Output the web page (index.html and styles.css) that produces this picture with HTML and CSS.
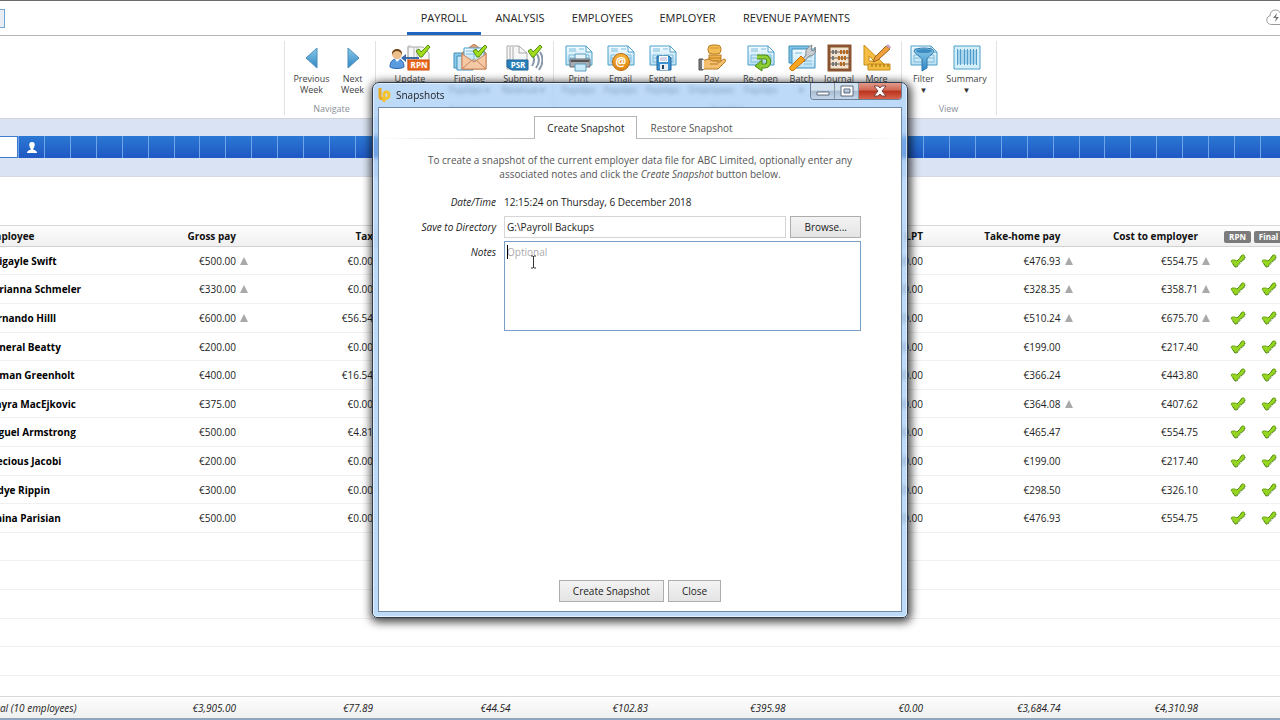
FILE: index.html
```html
<!DOCTYPE html>
<html lang="en">
<head>
    <meta charset="UTF-8">
    <meta name="viewport" content="width=device-width, initial-scale=1.0">
    <title>Payroll - Snapshots</title>
    <link rel="stylesheet" href="styles.css">
</head>
<body>
    <!-- shared icon shapes -->
    <svg class="defs" width="0" height="0" aria-hidden="true">
        <defs>
            <linearGradient id="gBlue" x1="0" y1="0" x2="0" y2="1">
                <stop offset="0" stop-color="#8ccbea"/><stop offset="1" stop-color="#2f86c4"/>
            </linearGradient>
            <linearGradient id="gPage" x1="0" y1="0" x2="0" y2="1">
                <stop offset="0" stop-color="#f4fbff"/><stop offset="1" stop-color="#b9e0f3"/>
            </linearGradient>
            <linearGradient id="gOrange" x1="0" y1="0" x2="0" y2="1">
                <stop offset="0" stop-color="#f9b53c"/><stop offset="1" stop-color="#dd820f"/>
            </linearGradient>
            <symbol id="sheet" viewBox="0 0 28 28">
                <path d="M1 2h20l6 6v13H1z" fill="url(#gPage)" stroke="#4b9fcb"/>
                <path d="M21 2v6h6z" fill="#fff" stroke="#4b9fcb"/>
                <path d="M4 5h7M4 7h7M14 5h5M4 11h9v7H4zM15 11h9v7h-9zM4 14h20" fill="none" stroke="#7dbddd"/>
            </symbol>
            <symbol id="tick" viewBox="0 0 16 14">
                <path d="M1 7l3-2 2 3 7-7 2 2-8 10H5z" fill="#a0dc1c" stroke="#548c14" stroke-width="1"/>
            </symbol>
            <symbol id="check" viewBox="0 0 16 14">
                <path d="M1 7l1-1h3l2 1 3-3 2-3h2l1 2-2 3-3 2-3 4-2 1H5L3 10z" fill="#97d61f" stroke="#6ea81f"/>
                <path d="M3 10l2 3h2l2-2 2-3 3-2 1-3M7 7l3-3 2-3" fill="none" stroke="#3f7010" stroke-dasharray="1 1"/>
            </symbol>
        </defs>
    </svg>

    <header class="topbar">
        <button class="app-button" aria-label="Menu"></button>
        <nav class="tabs">
            <a href="#" class="tab active">PAYROLL</a>
            <a href="#" class="tab">ANALYSIS</a>
            <a href="#" class="tab">EMPLOYEES</a>
            <a href="#" class="tab">EMPLOYER</a>
            <a href="#" class="tab">REVENUE PAYMENTS</a>
        </nav>
        <svg class="cloud" width="24" height="18" viewBox="0 0 24 18">
            <path d="M6 15.500C2 15.500 .8 13 .8 11c0-2.500 1.700-4 3.200-4.200C4 3 6.500 1 9.500 1c2.500 0 4 1.500 5 3 4-.5 5 3 4.500 4 3 1 3 7-1 7.500z" fill="#fff" stroke="#999"/>
            <path d="M11 4l-4 5h3l-1 4 4-5h-3z" fill="#777"/>
        </svg>
    </header>

    <div class="ribbon">
        <div class="group group-navigate">
            <div class="tools">
                <button class="tool">
                    <svg width="28" height="28" viewBox="0 0 28 28"><path d="M19 4v20L8 14z" fill="url(#gBlue)" stroke="#4a8dbb"/></svg>
                    <span>Previous<br>Week</span>
                </button>
                <button class="tool">
                    <svg width="28" height="28" viewBox="0 0 28 28"><path d="M9 4v20l11-10z" fill="url(#gBlue)" stroke="#4a8dbb"/></svg>
                    <span>Next<br>Week</span>
                </button>
            </div>
            <div class="group-name">Navigate</div>
        </div>
        <div class="group group-actions">
            <div class="tools">
                <button class="tool">
                    <svg width="42" height="28" viewBox="0 0 42 28">
                        <path d="M1 23c0-6 3-8 7-8s7 2 7 8c-3 2-11 2-14 0z" fill="#5b9be0" stroke="#2f66ac"/>
                        <path d="M6 15l2 3 3-3z" fill="#fff"/>
                        <circle cx="8" cy="10" r="5" fill="#edbd8a"/>
                        <path d="M3 11c-1-8 11-8 10 0-1-3-3-4-5-4s-4 1-5 4z" fill="#6e4519"/>
                        <path d="M19 3h15l6 6v16H19z" fill="#f7f7f7" stroke="#aaa"/>
                        <path d="M22 2h-3v15M25 3v14M28 3v14" fill="none" stroke="#bbb"/>
                        <rect x="19" y="16" width="21" height="10" fill="#ee6a20" stroke="#c94f0c"/>
                        <text x="30" y="24" class="icon-text" fill="#fff">RPN</text>
                        <path d="M30 13H17v-3l-5 4 5 4v-3h13z" fill="#3a6ba8"/>
                        <use href="#tick" x="26" y="0" width="16" height="14"/>
                    </svg>
                    <span>Update<br>&nbsp;</span>
                </button>
                <button class="tool">
                    <svg width="34" height="28" viewBox="0 0 34 28">
                        <path d="M1 9h16v15H1z" fill="#8cc9e8" stroke="#3c8fbd"/>
                        <path d="M4 12h16v14H4z" fill="#c6e6f5" stroke="#3c8fbd"/>
                        <path d="M9 9L21 0l12 9v16H9z" fill="#dba077" stroke="#b9784f"/>
                        <path d="M11 4h20v14H11z" fill="url(#gPage)" stroke="#4b9fcb"/>
                        <path d="M13 7h7M13 10h16M21 5v10" stroke="#7dbddd"/>
                        <path d="M9 10l12 8 12-8v15H9z" fill="#f6c9a6" stroke="#c88358"/>
                        <path d="M9 25l10-9h4l10 9" fill="none" stroke="#c88358"/>
                        <use href="#tick" x="19" y="0" width="16" height="14"/>
                    </svg>
                    <span>Finalise<br>Payslips ▾</span>
                </button>
                <button class="tool">
                    <svg width="38" height="28" viewBox="0 0 38 28">
                        <path d="M2 2h12l8 7v16H2z" fill="#f7f7f7" stroke="#aaa"/>
                        <path d="M5 3v14M8 3v14M14 2v7h8" fill="none" stroke="#aaa"/>
                        <path d="M2 16h21v10H7l-5-3z" fill="#2a80b9" stroke="#1c659b"/>
                        <text x="13" y="24" class="icon-text" fill="#fff">PSR</text>
                        <path d="M28 12c2 4 1 7-1 10M32 10c3 5 2 10-1 14M35 8c4 6 3 12-1 18" fill="none" stroke="#8796a8" stroke-width="2"/>
                        <use href="#tick" x="22" y="0" width="16" height="14"/>
                    </svg>
                    <span>Submit to<br>Revenue ▾</span>
                </button>
            </div>
            <div class="group-name">Actions</div>
        </div>
        <div class="group group-payslips">
            <div class="tools">
                <button class="tool">
                    <svg width="28" height="28" viewBox="0 0 28 28">
                        <use href="#sheet" width="28" height="28"/>
                        <path d="M10 10h11v6H10z" fill="#e7f5fb" stroke="#5c9dbf"/>
                        <path d="M5 15h20v8H5z" fill="#a7adb3" stroke="#666e76"/>
                        <path d="M6 17h18" stroke="#555" stroke-width="2"/>
                        <path d="M10 20h11v7H10z" fill="#c9eaf8" stroke="#5c9dbf"/>
                    </svg>
                    <span>Print<br>Payslips</span>
                </button>
                <button class="tool">
                    <svg width="28" height="28" viewBox="0 0 28 28">
                        <use href="#sheet" width="28" height="28"/>
                        <circle cx="14" cy="18" r="8.500" fill="url(#gOrange)" stroke="#b96b0b"/>
                        <text x="14" y="22" class="icon-at" fill="#fff">@</text>
                    </svg>
                    <span>Email<br>Payslips</span>
                </button>
                <button class="tool">
                    <svg width="28" height="28" viewBox="0 0 28 28">
                        <use href="#sheet" width="28" height="28"/>
                        <path d="M8 12h12l2 2v12H8z" fill="#3d93cf" stroke="#20659b"/>
                        <path d="M10 12h9v6h-9z" fill="#fff"/>
                        <path d="M11 14h7M11 16h7" stroke="#aac"/>
                        <path d="M11 20h8v6h-8z" fill="#e9eef2"/>
                        <path d="M13 21h2v4h-2z" fill="#246"/>
                    </svg>
                    <span>Export<br>Payslips</span>
                </button>
                <button class="tool">
                    <svg width="28" height="28" viewBox="0 0 28 28">
                        <rect x="10" y="1" width="13" height="9" rx="4" fill="#f3bd55" stroke="#bd7e20"/>
                        <path d="M12 4h9" stroke="#d09632"/>
                        <rect x="11" y="11" width="12" height="6" fill="#eeb14b" stroke="#bd7e20"/>
                        <path d="M11 14h12" stroke="#bd7e20"/>
                        <path d="M4 17l6-2 5 2h5v2l6-4c2 0 2 2 1 3l-7 7H4z" fill="#f4c06d" stroke="#b87827"/>
                        <path d="M1 15h4v11H1z" fill="#777" stroke="#555"/>
                        <path d="M5 16v9" stroke="#eee" stroke-width="2"/>
                        <path d="M12 20h8" stroke="#b87827"/>
                    </svg>
                    <span>Pay<br>Employees</span>
                </button>
                <button class="tool">
                    <svg width="28" height="28" viewBox="0 0 28 28">
                        <use href="#sheet" width="28" height="28"/>
                        <path d="M10 13h8c5 0 5 9 0 9h-5" fill="none" stroke="#4c8a16" stroke-width="5"/>
                        <path d="M15 16v11l-7-5z" fill="#83c529" stroke="#4c8a16"/>
                        <path d="M10 13h8c5 0 5 9 0 9h-5" fill="none" stroke="#8fce35" stroke-width="3"/>
                    </svg>
                    <span>Re-open<br>Payslips</span>
                </button>
                <button class="tool">
                    <svg width="28" height="28" viewBox="0 0 28 28">
                        <path d="M1 2h20v17H1z" fill="#7ec3e6" stroke="#3c8fbd"/>
                        <path d="M4 5h23v19H4z" fill="url(#gPage)" stroke="#3c8fbd"/>
                        <path d="M7 9h7M16 17h8M16 13h8M16 20h8" stroke="#7dbddd"/>
                        <path d="M14 16l4-5c-1-4 1-8 6-10l-1 5 3 1 1-4c2 5-1 9-6 9l-5 6z" fill="#c9ced3" stroke="#7d858c"/>
                        <path d="M13 12l4 4L6 26c-3 2-5-1-4-3z" fill="#f9a51f" stroke="#c87408"/>
                    </svg>
                    <span>Batch<br>▾</span>
                </button>
                <button class="tool">
                    <svg width="28" height="28" viewBox="0 0 28 28">
                        <rect x="4" y="2" width="21" height="24" fill="#f1e3cf" stroke="#8a5431" stroke-width="3"/>
                        <path d="M5 8h19M5 14h19M5 20h19" stroke="#6d5843"/>
                        <path d="M8 6v4M11 6v4M8 18v4M11 18v4M8 12v4" stroke="#777" stroke-width="2"/>
                        <path d="M16 6v4M19 6v4M22 6v4M17 12v4M20 12v4M14 12v4M19 18v4M16 18v4" stroke="#b56a24" stroke-width="2"/>
                    </svg>
                    <span>Journal<br>&nbsp;</span>
                </button>
                <button class="tool">
                    <svg width="28" height="28" viewBox="0 0 28 28">
                        <path d="M1 1l21 20H1z" fill="#f5be43" stroke="#c98d1b"/>
                        <path d="M6 12l5 5H6z" fill="#fff" stroke="#c98d1b"/>
                        <path d="M5 20h22v6H5z" fill="#f3bd3e" stroke="#c98d1b"/>
                        <path d="M9 20v3M13 20v3M17 20v3M21 20v3M25 20v3" stroke="#946714"/>
                        <path d="M10 18l2-5L23 2l4 3-12 11z" fill="#f0a03a" stroke="#9b6522"/>
                        <path d="M23 2l2-2 3 3-1 2z" fill="#c7a1c5"/>
                    </svg>
                    <span>More<br>&nbsp;</span>
                </button>
            </div>
            <div class="group-name">Payslips</div>
        </div>
        <div class="group group-view">
            <div class="tools">
                <button class="tool">
                    <svg width="28" height="28" viewBox="0 0 28 28">
                        <use href="#sheet" width="28" height="28"/>
                        <path d="M4 7c0-4 20-4 20 0 0 2-6 6-7 8v9l-5 3V15c-1-2-8-6-8-8z" fill="url(#gBlue)" stroke="#3079ab"/>
                        <ellipse cx="14" cy="7" rx="8" ry="2" fill="#3e8dc0"/>
                    </svg>
                    <span>Filter<br><i class="arrow">▼</i></span>
                </button>
                <button class="tool">
                    <svg width="28" height="28" viewBox="0 0 28 28">
                        <path d="M1 2h26v23H1z" fill="#d5effa" stroke="#4b9fcb"/>
                        <path d="M4 6h20v14H4z" fill="#a5d4ec"/>
                        <path d="M4.500 5v16M7.500 5v16M11.500 5v16M14.500 5v16M17.500 5v16M20.500 5v16M23.500 5v16" stroke="#4f9ccb"/>
                    </svg>
                    <span>Summary<br><i class="arrow">▼</i></span>
                </button>
            </div>
            <div class="group-name">View</div>
        </div>
    </div>

    <div class="period-band">
        <div class="period-bar">
            <div class="period-current"></div>
            <div class="period-weeks">
                <svg width="10" height="12" viewBox="0 0 10 12"><path d="M5 0c4 0 3 5 1 7 0 1 4 1 4 4H0c0-3 4-3 4-4C2 5 1 0 5 0z" fill="#fff"/></svg>
            </div>
        </div>
    </div>

    <main class="sheet">
        <table class="payroll">
            <colgroup>
                <col class="col-name"><col class="col-gross"><col class="col-tax"><col><col><col><col><col><col>
                <col class="col-rpn"><col class="col-final">
            </colgroup>
            <thead>
                <tr>
                    <th class="name">Employee</th><th>Gross pay</th><th>Tax</th><th>USC</th><th>PRSI</th><th>Pension</th><th>LPT</th>
                    <th>Take-home pay</th><th>Cost to employer</th>
                    <th class="flag rpn"><span class="badge">RPN</span></th><th class="flag"><span class="badge">Final</span></th>
                </tr>
            </thead>
            <tbody>
                <tr><td class="name">Abigayle Swift</td><td class="up">€500.00</td><td>€0.00</td><td></td><td></td><td></td><td>€0.00</td><td class="up">€476.93</td><td class="up">€554.75</td><td class="flag rpn"><svg><use href="#check"/></svg></td><td class="flag"><svg><use href="#check"/></svg></td></tr>
                <tr><td class="name">Adrianna Schmeler</td><td class="up">€330.00</td><td>€0.00</td><td></td><td></td><td></td><td>€0.00</td><td class="up">€328.35</td><td class="up">€358.71</td><td class="flag rpn"><svg><use href="#check"/></svg></td><td class="flag"><svg><use href="#check"/></svg></td></tr>
                <tr><td class="name">Fernando Hilll</td><td class="up">€600.00</td><td>€56.54</td><td></td><td></td><td></td><td>€0.00</td><td class="up">€510.24</td><td class="up">€675.70</td><td class="flag rpn"><svg><use href="#check"/></svg></td><td class="flag"><svg><use href="#check"/></svg></td></tr>
                <tr><td class="name">General Beatty</td><td>€200.00</td><td>€0.00</td><td></td><td></td><td></td><td>€0.00</td><td>€199.00</td><td>€217.40</td><td class="flag rpn"><svg><use href="#check"/></svg></td><td class="flag"><svg><use href="#check"/></svg></td></tr>
                <tr><td class="name">Hyman Greenholt</td><td>€400.00</td><td>€16.54</td><td></td><td></td><td></td><td>€0.00</td><td>€366.24</td><td>€443.80</td><td class="flag rpn"><svg><use href="#check"/></svg></td><td class="flag"><svg><use href="#check"/></svg></td></tr>
                <tr><td class="name">Mayra MacEjkovic</td><td>€375.00</td><td>€0.00</td><td></td><td></td><td></td><td>€0.00</td><td class="up">€364.08</td><td>€407.62</td><td class="flag rpn"><svg><use href="#check"/></svg></td><td class="flag"><svg><use href="#check"/></svg></td></tr>
                <tr><td class="name">Miguel Armstrong</td><td>€500.00</td><td>€4.81</td><td></td><td></td><td></td><td>€0.00</td><td>€465.47</td><td>€554.75</td><td class="flag rpn"><svg><use href="#check"/></svg></td><td class="flag"><svg><use href="#check"/></svg></td></tr>
                <tr><td class="name">Precious Jacobi</td><td>€200.00</td><td>€0.00</td><td></td><td></td><td></td><td>€0.00</td><td>€199.00</td><td>€217.40</td><td class="flag rpn"><svg><use href="#check"/></svg></td><td class="flag"><svg><use href="#check"/></svg></td></tr>
                <tr><td class="name">Sadye Rippin</td><td>€300.00</td><td>€0.00</td><td></td><td></td><td></td><td>€0.00</td><td>€298.50</td><td>€326.10</td><td class="flag rpn"><svg><use href="#check"/></svg></td><td class="flag"><svg><use href="#check"/></svg></td></tr>
                <tr><td class="name">Alaina Parisian</td><td>€500.00</td><td>€0.00</td><td></td><td></td><td></td><td>€0.00</td><td>€476.93</td><td>€554.75</td><td class="flag rpn"><svg><use href="#check"/></svg></td><td class="flag"><svg><use href="#check"/></svg></td></tr>
                <tr><td colspan="11"></td></tr>
                <tr><td colspan="11"></td></tr>
                <tr><td colspan="11"></td></tr>
                <tr><td colspan="11"></td></tr>
                <tr><td colspan="11"></td></tr>
            </tbody>
        </table>
    </main>

    <footer class="totals">
        <table class="payroll">
            <colgroup>
                <col class="col-name"><col class="col-gross"><col class="col-tax"><col><col><col><col><col><col>
                <col class="col-rpn"><col class="col-final">
            </colgroup>
            <tbody>
                <tr><td>Total (10 employees)</td><td>€3,905.00</td><td>€77.89</td><td>€44.54</td><td>€102.83</td><td>€395.98</td><td>€0.00</td><td>€3,684.74</td><td>€4,310.98</td><td></td><td></td></tr>
            </tbody>
        </table>
    </footer>

    <section class="window" role="dialog" aria-labelledby="windowTitle">
        <div class="titlebar">
            <svg width="13" height="16" viewBox="0 0 13 16">
                <path d="M2 1v9c0 2 3 2 4 1" fill="none" stroke="#e9a91c" stroke-width="3"/>
                <path d="M6 15V7c0-3 5-3 5 1 0 3-3 4-5 3" fill="none" stroke="#f5c22c" stroke-width="3"/>
            </svg>
            <h1 id="windowTitle">Snapshots</h1>
            <div class="window-buttons">
                <button aria-label="Minimise"><svg width="14" height="12" viewBox="0 0 14 12"><path d="M1 7h12v3H1z" fill="#fff" stroke="#5c6b7c"/></svg></button>
                <button aria-label="Maximise"><svg width="14" height="12" viewBox="0 0 14 12"><path d="M1 1h12v10H1zM4 4v4h6V4z" fill="#fff" fill-rule="evenodd" stroke="#5c6b7c"/></svg></button>
                <button class="close" aria-label="Close window"><svg width="14" height="12" viewBox="0 0 14 12"><path d="M1 1h4l2 2 2-2h4L9 6l4 5H9L7 9l-2 2H1l4-5z" fill="#fff" stroke="#7a4040"/></svg></button>
            </div>
        </div>
        <div class="window-body">
            <div class="dialog-tabs">
                <button class="dialog-tab selected">Create Snapshot</button>
                <button class="dialog-tab">Restore Snapshot</button>
            </div>
            <p class="intro">To create a snapshot of the current employer data file for ABC Limited, optionally enter any associated notes and click the <em>Create Snapshot</em> button below.</p>
            <form class="snapshot-form" id="snapshotForm">
                <span class="label">Date/Time</span>
                <span class="value">12:15:24 on Thursday, 6 December 2018</span>
                <label class="label" for="directory">Save to Directory</label>
                <div class="directory">
                    <input type="text" id="directory" value="G:\Payroll Backups">
                    <button type="button" class="btn">Browse...</button>
                </div>
                <label class="label" for="notes">Notes</label>
                <div class="notes">
                    <textarea id="notes" placeholder="Optional"></textarea>
                    <span class="caret"></span>
                    <svg class="pointer" width="7" height="14" viewBox="0 0 7 14"><path d="M1 1h2l.5.500.500-.500h2M3.500 1v12M1 13h2l.5-.500.500.500h2" fill="none" stroke="#333"/></svg>
                </div>
            </form>
            <div class="dialog-actions">
                <button type="submit" form="snapshotForm" class="btn">Create Snapshot</button>
                <button type="button" class="btn">Close</button>
            </div>
        </div>
    </section>
</body>
</html>
```
FILE: styles.css
```css
* {
    box-sizing: border-box;
}
body {
    display: flex;
    flex-direction: column;
    height: 100vh;
    margin: 0;
    overflow: hidden;
    background: #fff;
    color: #222;
    font-family: "Open Sans", "Noto Sans", sans-serif;
    font-size: 10px;
}
button, input, textarea {
    font: inherit;
    color: inherit;
    margin: 0;
}
button {
    cursor: pointer;
}
.defs {
    position: absolute;
}

/* top tabs */
.topbar {
    display: flex;
    justify-content: space-between;
    align-items: center;
    height: 36px;
    flex: none;
    border-top: 1px solid #6b6b6b;
    border-bottom: 1px solid #b4b4b4;
}
.app-button {
    width: 5px;
    height: 19px;
    padding: 0;
    border: 1px solid #6fa5d3;
    border-left: 0;
    background: #e9eef5;
}
.cloud {
    margin-right: -10px;
}
.tabs {
    display: grid;
    grid-template-columns: 74px 78px 87px 83px 135px;
    align-self: stretch;
}
.tab {
    display: flex;
    align-items: center;
    justify-content: center;
    padding-top: 2px;
    border-bottom: 3px solid transparent;
    color: #222;
    font-size: 11px;
    text-decoration: none;
    white-space: nowrap;
}
.tab.active {
    border-bottom-color: #1f66c0;
}

/* ribbon */
.ribbon {
    display: flex;
    justify-content: center;
    flex: none;
    height: 82px;
    padding: 5px 0 3px;
}
.group {
    display: flex;
    flex-direction: column;
    justify-content: space-between;
    padding: 3px 4px 0;
    border-right: 1px solid #e2e2e2;
}
.group-navigate {
    padding: 3px 2px 0 6px;
    border-left: 1px solid #e2e2e2;
}
.tools {
    display: grid;
}
.group-navigate .tools {
    grid-template-columns: 42px 40px;
}
.group-actions .tools {
    grid-template-columns: 61px 58px 50px;
}
.group-payslips .tools {
    grid-template-columns: 42px 42px 42px 56px 42px 40px 35px 40px;
}
.group-view .tools {
    grid-template-columns: 36px 50px;
}
.tool {
    display: flex;
    flex-direction: column;
    align-items: center;
    padding: 0;
    border: 0;
    background: none;
    color: #444;
    font-size: 9px;
    line-height: 11px;
    text-align: center;
    white-space: nowrap;
}
.tool span {
    margin-top: 1px;
}
.arrow {
    font-size: 8px;
    font-style: normal;
    color: #333;
}
.group-name {
    color: #8a8f99;
    font-size: 9px;
    line-height: 12px;
    text-align: center;
}
.icon-text {
    font: bold 8px "Open Sans", sans-serif;
    text-anchor: middle;
}
.icon-at {
    font: bold 12px "Open Sans", sans-serif;
    text-anchor: middle;
}

/* pay period timeline */
.period-band {
    flex: none;
    height: 59px;
    padding: 17px 0;
    border-top: 1px solid #cfd3da;
    border-bottom: 1px solid #d5dae3;
    background: #dae3f3;
}
.period-bar {
    display: flex;
    height: 22px;
}
.period-current {
    width: 18px;
    border: 1px solid #3f7ccb;
    border-left: 0;
    background: #fff;
}
.period-weeks {
    flex: 1;
    padding: 6px 9px;
    background:
        repeating-linear-gradient(to right,
            #6fa4e8 0 1px, transparent 1px 26px,
            #6fa4e8 26px 27px, transparent 27px 52px,
            #6fa4e8 52px 53px, transparent 53px 78px,
            #6fa4e8 78px 79px, transparent 79px 104px,
            #6fa4e8 104px 105px, transparent 105px 130px,
            #6fa4e8 130px 131px, transparent 131px 156px,
            #6fa4e8 156px 157px, transparent 157px 181px),
        linear-gradient(#2b78d4, #1f57c3);
}

/* employee table */
.sheet {
    flex: 1;
    min-height: 0;
    overflow: hidden;
    padding-top: 48px;
}
.payroll {
    width: calc(100% + 23px);
    margin-left: -19px;
    table-layout: fixed;
    border-collapse: separate;
    border-spacing: 0;
}
.col-name {
    width: 118px;
}
.col-gross, .col-tax {
    width: 137px;
}
.col-rpn {
    width: 55px;
}
.col-final {
    width: 31px;
}
.payroll th, .payroll td {
    padding: 0;
    text-align: right;
    white-space: nowrap;
}
.payroll th {
    height: 22px;
    border-top: 1px solid #d9d9d9;
    border-bottom: 1px solid #d2d2d2;
    background: linear-gradient(#fdfdfd, #f0f0f0);
    color: #111;
    font-weight: bold;
}
.payroll td {
    height: 28px;
    border-bottom: 1px solid #f0f0f0;
}
.payroll tr:nth-child(5n+2) td, .payroll tr:nth-child(5n+3) td, .payroll tr:nth-child(5n) td {
    height: 29px;
}
.payroll .name, .totals td:first-child {
    padding-left: 5px;
    text-align: left;
}
.payroll td.name {
    color: #000;
    font-weight: bold;
}
.payroll .flag {
    text-align: center;
}
.payroll .rpn {
    padding-left: 24px;
}
.flag svg {
    display: block;
    width: 16px;
    height: 14px;
    margin: 0 auto;
}
.badge {
    display: inline-block;
    padding: 0 5px;
    border-radius: 2px;
    background: #7b7b7b;
    color: #fff;
    font-size: 8px;
    line-height: 12px;
}
.up {
    position: relative;
}
.up::after {
    content: "";
    position: absolute;
    left: 100%;
    top: 10px;
    margin-left: 4px;
    border: 4px solid transparent;
    border-top: 0;
    border-bottom: 8px solid #a9a9a9;
}
.totals {
    flex: none;
    height: 24px;
    overflow: hidden;
    border-top: 1px solid #d9d9d9;
    border-bottom: 2px solid #8ea6bf;
    background: linear-gradient(#fdfdfd, #f0f0f0);
    font-style: italic;
}
.totals .payroll td {
    height: 21px;
    border: 0;
}

/* snapshot window */
.window {
    position: absolute;
    top: 82px;
    left: 50%;
    display: flex;
    flex-direction: column;
    width: 536px;
    height: 536px;
    padding: 0 5px 5px;
    transform: translateX(-50%);
    border: 1px solid #2f3d4d;
    border-radius: 7px 7px 5px 5px;
    background: rgba(155, 198, 246, 0.65);
    backdrop-filter: blur(2px);
    box-shadow: inset 0 0 0 1px rgba(255, 255, 255, 0.6), 1px 2px 10px 2px rgba(0, 0, 0, 0.75);
}
.titlebar {
    display: flex;
    align-items: center;
    flex: none;
    height: 24px;
}
.titlebar h1 {
    flex: 1;
    margin: 0 0 0 5px;
    font-size: 10px;
    font-weight: normal;
}
.window-buttons {
    display: flex;
    align-self: flex-start;
    border: 1px solid #6d7f94;
    border-top: 0;
    border-radius: 0 0 4px 4px;
    overflow: hidden;
}
.window-buttons button {
    display: flex;
    align-items: center;
    justify-content: center;
    width: 24px;
    height: 16px;
    padding: 0;
    border: 0;
    border-right: 1px solid #8496aa;
    background: linear-gradient(#d3e0ee 45%, #a9bdd3 50%, #c3d6ea);
}
.window-buttons .close {
    width: 42px;
    border-right: 0;
    background: linear-gradient(#e39a8c 0, #d06752 45%, #b8321c 50%, #d8624c);
}
.window-body {
    display: flex;
    flex-direction: column;
    flex: 1;
    padding: 8px 0 9px;
    border: 1px solid #6f89a6;
    background: #fff;
}
.dialog-tabs {
    display: flex;
    justify-content: center;
    height: 23px;
    background: linear-gradient(to right, transparent, #bbb 30%, #bbb 70%, transparent) bottom / 100% 1px no-repeat;
}
.dialog-tab {
    padding: 0 12px;
    border: 1px solid transparent;
    background: none;
    color: #555;
}
.dialog-tab.selected {
    border-color: #b5b5b5;
    border-bottom: 0;
    background: #fff;
    color: #222;
}
.intro {
    margin: 14px 40px 10px;
    color: #555;
    line-height: 14px;
    text-align: center;
}
.snapshot-form {
    display: grid;
    grid-template-columns: 117px 1fr;
    gap: 3px 8px;
    padding-right: 40px;
}
.label {
    font-style: italic;
    line-height: 22px;
    text-align: right;
}
.value {
    line-height: 22px;
}
.directory {
    display: flex;
    gap: 4px;
}
.directory input {
    flex: 1;
    min-width: 0;
    height: 22px;
    padding: 0 2px;
    border: 1px solid #d5d5d5;
}
.btn {
    height: 22px;
    padding: 0 13px;
    border: 1px solid #adadad;
    background: linear-gradient(#f3f3f3, #e4e4e4);
    color: #222;
}
.notes {
    position: relative;
}
.notes textarea {
    display: block;
    width: 100%;
    height: 90px;
    padding: 3px 2px;
    border: 1px solid #7a9fc6;
    line-height: 14px;
    resize: none;
}
.notes textarea::placeholder {
    color: #aaa;
}
.caret {
    position: absolute;
    top: 4px;
    left: 3px;
    width: 1px;
    height: 14px;
    background: #000;
}
.pointer {
    position: absolute;
    top: 14px;
    left: 26px;
}
.dialog-actions {
    display: flex;
    justify-content: center;
    gap: 4px;
    margin-top: auto;
}
```
